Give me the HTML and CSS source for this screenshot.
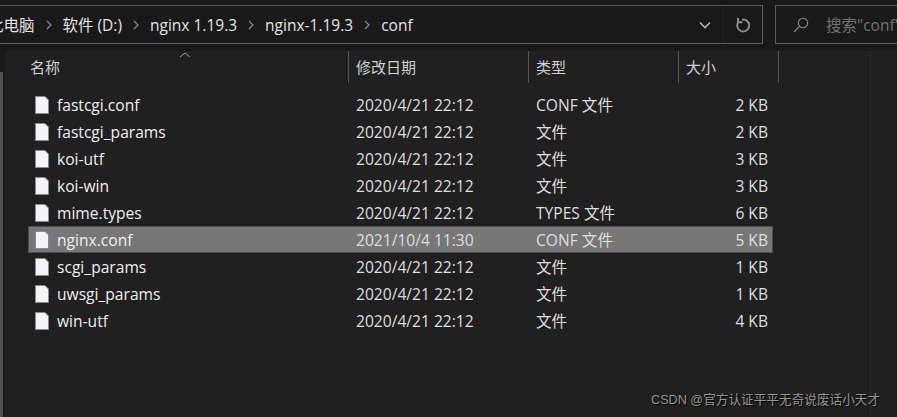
FILE: index.html
```html
<!DOCTYPE html>
<html lang="zh-CN">
<head>
<meta charset="utf-8">
<title>conf</title>
<link rel="stylesheet" href="styles.css">
</head>
<body>
<div class="window">
  <header class="toolbar">
    <div class="address">
      <nav class="crumbs">
        <span class="crumb">此电脑</span>
        <svg class="sep" viewBox="0 0 6 10"><path d="M1 1l4 4-4 4"/></svg>
        <span class="crumb">软件 (D:)</span>
        <svg class="sep" viewBox="0 0 6 10"><path d="M1 1l4 4-4 4"/></svg>
        <span class="crumb">nginx 1.19.3</span>
        <svg class="sep" viewBox="0 0 6 10"><path d="M1 1l4 4-4 4"/></svg>
        <span class="crumb">nginx-1.19.3</span>
        <svg class="sep" viewBox="0 0 6 10"><path d="M1 1l4 4-4 4"/></svg>
        <span class="crumb">conf</span>
      </nav>
      <div class="addr-drop">
        <svg class="chev" viewBox="0 0 12 8"><path d="M1 1.5l5 5 5-5"/></svg>
      </div>
      <div class="addr-refresh">
        <svg class="refresh" viewBox="0 0 16 16"><path d="M7 2.6A6 6 0 1 1 3.3 5"/><path d="M3 .8v4.4h4.4"/></svg>
      </div>
    </div>
    <div class="search">
      <svg class="lens" viewBox="0 0 16 16"><circle cx="10" cy="6" r="4.7"/><path d="M6.6 9.4L1 15"/></svg>
      <span class="search-text">搜索"conf"</span>
    </div>
  </header>
  <main class="body">
    <div class="rail"><div class="rail-thumb"></div></div>
    <section class="list">
      <div class="head">
        <div class="hcell name">名称<svg class="sort" viewBox="0 0 12 6"><path d="M1 5l5-4 5 4"/></svg></div>
        <div class="hcell">修改日期</div>
        <div class="hcell">类型</div>
        <div class="hcell">大小</div>
      </div>
      <div class="rows">
        <div class="row"><div class="fname"><svg class="file" viewBox="0 0 14 18"><path d="M.5.5h9.5l3.5 3.5v13.500H.5z"/></svg>fastcgi.conf</div><div>2020/4/21 22:12</div><div>CONF 文件</div><div class="size">2 KB</div></div>
        <div class="row"><div class="fname"><svg class="file" viewBox="0 0 14 18"><path d="M.5.5h9.5l3.5 3.5v13.500H.5z"/></svg>fastcgi_params</div><div>2020/4/21 22:12</div><div>文件</div><div class="size">2 KB</div></div>
        <div class="row"><div class="fname"><svg class="file" viewBox="0 0 14 18"><path d="M.5.5h9.5l3.5 3.5v13.500H.5z"/></svg>koi-utf</div><div>2020/4/21 22:12</div><div>文件</div><div class="size">3 KB</div></div>
        <div class="row"><div class="fname"><svg class="file" viewBox="0 0 14 18"><path d="M.5.5h9.5l3.5 3.5v13.500H.5z"/></svg>koi-win</div><div>2020/4/21 22:12</div><div>文件</div><div class="size">3 KB</div></div>
        <div class="row"><div class="fname"><svg class="file" viewBox="0 0 14 18"><path d="M.5.5h9.5l3.5 3.5v13.500H.5z"/></svg>mime.types</div><div>2020/4/21 22:12</div><div>TYPES 文件</div><div class="size">6 KB</div></div>
        <div class="row selected"><div class="fname"><svg class="file" viewBox="0 0 14 18"><path d="M.5.5h9.5l3.5 3.5v13.500H.5z"/></svg>nginx.conf</div><div>2021/10/4 11:30</div><div>CONF 文件</div><div class="size">5 KB</div></div>
        <div class="row"><div class="fname"><svg class="file" viewBox="0 0 14 18"><path d="M.5.5h9.5l3.5 3.5v13.500H.5z"/></svg>scgi_params</div><div>2020/4/21 22:12</div><div>文件</div><div class="size">1 KB</div></div>
        <div class="row"><div class="fname"><svg class="file" viewBox="0 0 14 18"><path d="M.5.5h9.5l3.5 3.5v13.500H.5z"/></svg>uwsgi_params</div><div>2020/4/21 22:12</div><div>文件</div><div class="size">1 KB</div></div>
        <div class="row"><div class="fname"><svg class="file" viewBox="0 0 14 18"><path d="M.5.5h9.5l3.5 3.5v13.500H.5z"/></svg>win-utf</div><div>2020/4/21 22:12</div><div>文件</div><div class="size">4 KB</div></div>
      </div>
    </section>
    <div class="pane-edge"></div>
  </main>
  <div class="watermark">CSDN @官方认证平平无奇说废话小天才</div>
</div>
</body>
</html>
```
FILE: styles.css
```css
* { box-sizing: border-box; }
html, body { margin: 0; padding: 0; height: 100%; overflow: hidden; background: #202020; }
body { font-family: "Open Sans", "Noto Sans CJK SC", sans-serif; color: #e8e8e8; }
.window { position: relative; width: 897px; height: 417px; display: flex; flex-direction: column; overflow: hidden; }

.toolbar { height: 51px; flex: none; background: #191919; padding-top: 5px; display: flex; gap: 12px; align-items: flex-start; }
.address { height: 39px; width: 776px; margin-left: -13px; border: 1px solid #5c5c5c; display: flex; align-items: stretch; flex: none; }
.crumbs { flex: 1; display: flex; align-items: center; font-size: 15.5px; color: #e4e4e4; overflow: hidden; white-space: nowrap; }
.crumb { display: block; }
.sep { width: 6px; height: 10px; margin: 0 11px; fill: none; stroke: #8a8a8a; stroke-width: 1.2; flex: none; }
.addr-drop { width: 36px; display: flex; align-items: center; justify-content: center; }
.chev { width: 12px; height: 8px; fill: none; stroke: #b4b4b4; stroke-width: 1.6; }
.addr-refresh { width: 39px; border-left: 1px solid #222; display: flex; align-items: center; justify-content: center; }
.refresh { width: 16px; height: 16px; fill: none; stroke: #8e8e8e; stroke-width: 1.9; }
.search { flex: none; width: 140px; height: 39px; border: 1px solid #5c5c5c; border-right: 0; display: flex; align-items: center; padding-left: 17px; gap: 17px; overflow: hidden; white-space: nowrap; }
.lens { width: 16px; height: 16px; fill: none; stroke: #8c8c8c; stroke-width: 1.1; flex: none; }
.search-text { font-size: 15.5px; color: #727272; }

.body { flex: 1; display: flex; background: #202020; min-height: 0; }
.rail { width: 6px; flex: none; padding-top: 21px; background: #1a1a1a; }
.rail-thumb { width: 3px; height: 100%; background: #505050; }
.list { width: 864px; flex: none; padding-left: 22px; }
.pane-edge { width: 1px; background: #2b2b2b; flex: none; }

.head { display: grid; grid-template-columns: 321px 180px 150px 100px; height: 32px; }
.hcell { position: relative; border-right: 1px solid #555; padding: 0 0 2px 7px; font-size: 15px; color: #d0d0d0; display: flex; align-items: center; }
.hcell.name { padding-left: 2px; }
.sort { position: absolute; left: 151px; top: 1px; width: 12px; height: 6px; fill: none; stroke: #999; stroke-width: 1; }

.rows { padding-top: 8px; width: 745px; }
.row { display: grid; grid-template-columns: 320px 180px 150px 1fr; height: 27px; align-items: center; font-size: 15.6px; color: #dedede; white-space: nowrap; border: 1px solid transparent; }
.row > div:not(.fname) { padding-left: 7px; }
.row > .size { padding-left: 0; padding-right: 4px; text-align: right; }
.fname { display: flex; align-items: center; gap: 8px; padding-left: 6px; color: #efefef; }
.file { width: 14px; height: 18px; flex: none; fill: #f4f4f6; stroke: #8a8a8a; stroke-width: 1; }
.selected { background: #777; border-color: #4d4d4d; }

.watermark { position: absolute; left: 651px; top: 392px; font-family: "Liberation Sans", "Noto Sans CJK SC", sans-serif; font-size: 12.65px; line-height: 16px; color: #959595; white-space: nowrap; text-shadow: 1px 1px 1px #000; }
```
